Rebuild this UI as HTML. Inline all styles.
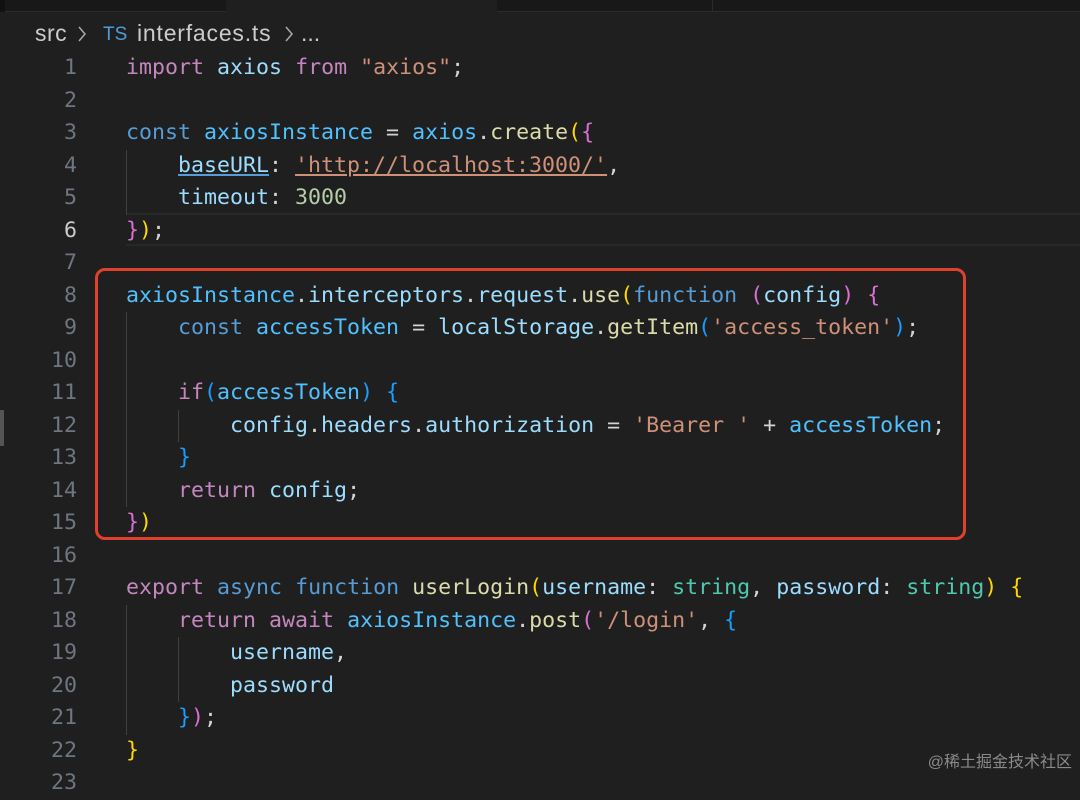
<!DOCTYPE html>
<html><head><meta charset="utf-8"><style>
*{margin:0;padding:0;box-sizing:border-box}
body{width:1080px;height:780px;background:#1f1f1f;overflow:hidden;position:relative;font-family:"DejaVu Sans Mono","Liberation Mono",monospace;}
.tabs{position:absolute;top:0;left:0;width:1080px;height:12px;background:#181818;border-bottom:1px solid #2b2b2b}
.tab{position:absolute;top:0;height:12px}
.bc{position:absolute;top:19px;font-family:"Liberation Sans",sans-serif;font-size:23px;color:#cccccc;line-height:28px;white-space:nowrap}
.ln{position:absolute;left:0;width:77px;text-align:right;font-size:21.6px;color:#6e7681;height:32.5px;line-height:32.5px}
.cl{position:absolute;left:126px;font-size:21.6px;height:32.5px;line-height:32.5px;white-space:pre;color:#d4d4d4}
.k{color:#c586c0}.b{color:#569cd6}.v{color:#9cdcfe}.c{color:#4fc1ff}.f{color:#dcdcaa}.s{color:#ce9178}.n{color:#b5cea8}.t{color:#4ec9b0}
.y{color:#ffd700}.p{color:#da70d6}.q{color:#179fff}
.g{position:absolute;width:1px;background:#404040}
</style></head><body>
<div class="tabs">
<div class="tab" style="left:0;width:5px;background:#111"></div>
<div class="tab" style="left:226px;width:271px;background:#1f1f1f;height:13px"></div>
<div class="tab" style="left:712px;width:1px;background:#2b2b2b"></div>
</div>
<div style="position:absolute;left:0;top:410px;width:4px;height:36px;background:#555"></div>
<div class="bc" style="left:35px;letter-spacing:0.5px">src</div>
<svg style="position:absolute;left:76px;top:25px" width="12" height="18"><path d="M3 2 L9 9 L3 16" stroke="#aaa" stroke-width="1.5" fill="none"/></svg>
<div class="bc" style="left:103px;color:#4b9ed6;font-size:19px;top:21px">TS</div>
<div class="bc" style="left:137px;letter-spacing:0.8px">interfaces.ts</div>
<svg style="position:absolute;left:283px;top:25px" width="12" height="18"><path d="M3 2 L9 9 L3 16" stroke="#aaa" stroke-width="1.5" fill="none"/></svg>
<div class="bc" style="left:301px">...</div>
<div style="position:absolute;left:126px;top:213px;width:954px;height:33px;border-top:2px solid #282828;border-bottom:2px solid #282828"></div>
<div class="g" style="left:126px;top:150px;height:65px"></div>
<div class="g" style="left:126px;top:312px;height:195px"></div>
<div class="g" style="left:178px;top:410px;height:32px"></div>
<div class="g" style="left:126px;top:605px;height:130px"></div>
<div class="g" style="left:178px;top:637px;height:65px"></div>
<div id="c"></div>
<div style="position:absolute;left:95px;top:268px;width:871px;height:272px;border:3px solid #e0412d;border-radius:10px"></div>
<div style="position:absolute;right:8px;bottom:8px;font-family:'Liberation Sans','Noto Sans CJK SC',sans-serif;font-size:16px;color:#8a8a8a">@稀土掘金技术社区</div>
<script>
var L=[
'<span class="k">import</span> <span class="v">axios</span> <span class="k">from</span> <span class="s">"axios"</span>;',
'',
'<span class="b">const</span> <span class="c">axiosInstance</span> = <span class="c">axios</span>.<span class="f">create</span><span class="y">(</span><span class="p">{</span>',
'    <span class="v" style="text-decoration:underline;text-decoration-color:#569cd6">baseURL</span>: <span class="s" style="text-decoration:underline">\'http://localhost:3000/\'</span>,',
'    <span class="v">timeout</span>: <span class="n">3000</span>',
'<span class="p">}</span><span class="y">)</span>;',
'',
'<span class="c">axiosInstance</span>.<span class="v">interceptors</span>.<span class="v">request</span>.<span class="f">use</span><span class="y">(</span><span class="b">function</span> <span class="p">(</span><span class="v">config</span><span class="p">)</span> <span class="p">{</span>',
'    <span class="b">const</span> <span class="c">accessToken</span> = <span class="v">localStorage</span>.<span class="f">getItem</span><span class="q">(</span><span class="s">\'access_token\'</span><span class="q">)</span>;',
'',
'    <span class="k">if</span><span class="q">(</span><span class="c">accessToken</span><span class="q">)</span> <span class="q">{</span>',
'        <span class="v">config</span>.<span class="v">headers</span>.<span class="v">authorization</span> = <span class="s">\'Bearer \'</span> + <span class="c">accessToken</span>;',
'    <span class="q">}</span>',
'    <span class="k">return</span> <span class="v">config</span>;',
'<span class="p">}</span><span class="y">)</span>',
'',
'<span class="k">export</span> <span class="b">async</span> <span class="b">function</span> <span class="f">userLogin</span><span class="y">(</span><span class="v">username</span>: <span class="t">string</span>, <span class="v">password</span>: <span class="t">string</span><span class="y">)</span> <span class="y">{</span>',
'    <span class="k">return</span> <span class="k">await</span> <span class="c">axiosInstance</span>.<span class="f">post</span><span class="p">(</span><span class="s">\'/login\'</span>, <span class="q">{</span>',
'        <span class="v">username</span>,',
'        <span class="v">password</span>',
'    <span class="q">}</span><span class="p">)</span>;',
'<span class="y">}</span>',
''];
var h='';
for(var i=0;i<23;i++){var t=52+32.5*i;
h+='<div class="ln" style="top:'+t+'px;'+(i==5?'color:#cccccc':'')+'">'+(i+1)+'</div><div class="cl" style="top:'+t+'px">'+L[i]+'</div>';}
document.getElementById('c').innerHTML=h;
</script>
</body></html>
